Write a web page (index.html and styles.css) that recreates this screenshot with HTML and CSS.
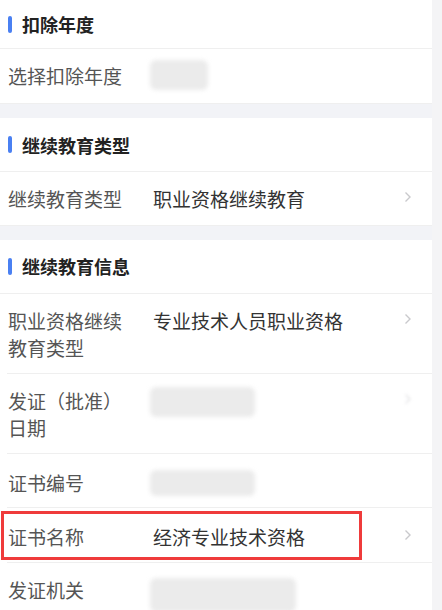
FILE: index.html
```html
<!DOCTYPE html>
<html lang="zh-CN">
<head>
<meta charset="utf-8">
<link rel="stylesheet" href="styles.css">
</head>
<body>
<div class="page">
  <section class="group">
    <div class="head head-first"><span class="bar"></span><span class="head-text">扣除年度</span></div>
    <div class="row">
      <div class="label">选择扣除年度</div>
      <div class="value"><div class="blur blur-year"></div></div>
    </div>
  </section>
  <div class="gap"></div>
  <section class="group">
    <div class="head"><span class="bar"></span><span class="head-text">继续教育类型</span></div>
    <div class="row">
      <div class="label">继续教育类型</div>
      <div class="value">职业资格继续教育</div>
      <svg class="chev" width="8" height="12" viewBox="0 0 8 12"><path d="M1.5 1.5 L6 6 L1.5 10.5" fill="none" stroke="#c9c9cc" stroke-width="1.4"/></svg>
    </div>
  </section>
  <div class="gap"></div>
  <section class="group">
    <div class="head head-third"><span class="bar"></span><span class="head-text">继续教育信息</span></div>
    <div class="row row-inset">
      <div class="label">职业资格继续<br>教育类型</div>
      <div class="value">专业技术人员职业资格</div>
      <svg class="chev" width="8" height="12" viewBox="0 0 8 12"><path d="M1.5 1.5 L6 6 L1.5 10.5" fill="none" stroke="#c9c9cc" stroke-width="1.4"/></svg>
    </div>
    <div class="row row-inset">
      <div class="label">发证（批准）<br>日期</div>
      <div class="value"><div class="blur blur-date"></div></div>
      <svg class="chev chev-faint" width="8" height="12" viewBox="0 0 8 12"><path d="M1.5 1.5 L6 6 L1.5 10.5" fill="none" stroke="#c9c9cc" stroke-width="1.4"/></svg>
    </div>
    <div class="row row-inset row-no">
      <div class="label">证书编号</div>
      <div class="value"><div class="blur blur-no"></div></div>
    </div>
    <div class="row row-inset row-name">
      <div class="label">证书名称</div>
      <div class="value">经济专业技术资格</div>
      <svg class="chev" width="8" height="12" viewBox="0 0 8 12"><path d="M1.5 1.5 L6 6 L1.5 10.5" fill="none" stroke="#c9c9cc" stroke-width="1.4"/></svg>
      <div class="mark"></div>
    </div>
    <div class="row row-inset">
      <div class="label">发证机关</div>
      <div class="value"><div class="blur blur-org"></div></div>
    </div>
  </section>
</div>
</body>
</html>
```

FILE: styles.css
```css
html, body {
  margin: 0;
  padding: 0;
}
body {
  background: #f4f4f6;
  font-family: "Noto Sans CJK SC", "Noto Sans", sans-serif;
  overflow: hidden;
}
.page {
  width: 432px;
  background: #fff;
}
.group {
  background: #fff;
}
.gap {
  height: 14px;
  background: #f2f3f7;
}
.head {
  height: 53px;
  border-bottom: 1px solid #efefef;
  display: flex;
  align-items: center;
  padding-left: 8px;
  gap: 10px;
}
.head-first {
  height: 48px;
}
.head-third {
  height: 52px;
  padding-bottom: 1px;
}
.bar {
  width: 4px;
  height: 17px;
  border-radius: 2px;
  background: #4a80f2;
}
.head-text {
  font-size: 18px;
  font-weight: 700;
  color: #222;
  line-height: 1;
}
.row {
  position: relative;
  display: flex;
  align-items: flex-start;
  padding: 13px 20px 13px 8px;
  border-bottom: 1px solid #efefef;
  font-size: 19px;
  line-height: 27px;
}
.row-inset {
  border-bottom: none;
}
.row-inset::after {
  content: "";
  position: absolute;
  left: 7px;
  right: 0;
  bottom: 0;
  height: 1px;
  background: #efefef;
}
.row-no {
  padding-top: 15px;
  padding-bottom: 12px;
}
.row-name {
  padding-top: 15px;
}
.label {
  width: 145px;
  flex: none;
  color: #555;
}
.value {
  flex: 1;
  color: #333;
  min-height: 27px;
}
.chev {
  flex: none;
  margin-top: 6px;
}
.chev-faint {
  opacity: 0.5;
  filter: blur(1.5px);
}
.blur {
  background: #ebebeb;
  border-radius: 6px;
  filter: blur(2px);
  margin-left: -3px;
}
.blur-year {
  width: 58px;
  height: 30px;
  margin-top: -2px;
}
.blur-date {
  width: 105px;
  height: 30px;
}
.blur-no {
  width: 105px;
  height: 26px;
  margin-top: 1px;
}
.blur-org {
  width: 146px;
  height: 34px;
  margin-top: 2px;
}
.mark {
  position: absolute;
  left: 1px;
  top: 3px;
  width: 355px;
  height: 43px;
  border: 3px solid #ef3b3b;
}
```
